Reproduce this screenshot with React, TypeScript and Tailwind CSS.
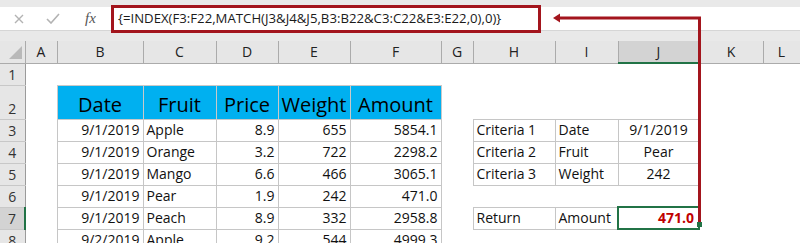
import React from 'react';

type Cell = { t?: string; a?: 'l' | 'r' | 'c'; k?: 'blue' | 'box' | 'ret' };

const colWidths = [25, 32, 86, 73, 62, 72, 91, 32, 82, 63, 81, 64, 37];
const letters = ['A', 'B', 'C', 'D', 'E', 'F', 'G', 'H', 'I', 'J', 'K', 'L'];

const fruitRows = [
  ['9/1/2019', 'Apple', '8.9', '655', '5854.1'],
  ['9/1/2019', 'Orange', '3.2', '722', '2298.2'],
  ['9/1/2019', 'Mango', '6.6', '466', '3065.1'],
  ['9/1/2019', 'Pear', '1.9', '242', '471.0'],
  ['9/1/2019', 'Peach', '8.9', '332', '2958.8'],
  ['9/2/2019', 'Apple', '9.2', '544', '4999.3'],
];

const criteria: Record<number, [string, string, string]> = {
  0: ['Criteria 1', 'Date', '9/1/2019'],
  1: ['Criteria 2', 'Fruit', 'Pear'],
  2: ['Criteria 3', 'Weight', '242'],
};

function buildRows(): Cell[][] {
  const rows: Cell[][] = [];
  // row 1
  rows.push(Array.from({ length: 12 }, () => ({})));
  // row 2 - blue header
  const head = ['Date', 'Fruit', 'Price', 'Weight', 'Amount'];
  rows.push([{}, ...head.map((t) => ({ t, a: 'c' as const, k: 'blue' as const })), {}, {}, {}, {}, {}, {}]);
  fruitRows.forEach((r, i) => {
    const row: Cell[] = [
      {},
      { t: r[0], a: 'r', k: 'box' },
      { t: r[1], a: 'l', k: 'box' },
      { t: r[2], a: 'r', k: 'box' },
      { t: r[3], a: 'r', k: 'box' },
      { t: r[4], a: 'r', k: 'box' },
      {},
    ];
    const c = criteria[i];
    if (c) {
      row.push({ t: c[0], a: 'l', k: 'box' }, { t: c[1], a: 'l', k: 'box' }, { t: c[2], a: 'c', k: 'box' });
    } else if (i === 4) {
      row.push({ t: 'Return', a: 'l', k: 'box' }, { t: 'Amount', a: 'l', k: 'box' }, { t: '471.0', a: 'r', k: 'ret' });
    } else {
      row.push({}, {}, {});
    }
    row.push({}, {});
    rows.push(row);
  });
  return rows;
}

function cellClass(c: Cell) {
  const align = c.a === 'r' ? 'text-right' : c.a === 'c' ? 'text-center' : 'text-left';
  if (c.k === 'blue') return `${align} bg-[#00b0f0] border border-[#c9c9c9] text-[20px] text-black align-bottom pb-[4px]`;
  if (c.k === 'ret') return `${align} border-2 border-[#217346] font-bold text-[#c00000] pr-[4px]`;
  if (c.k === 'box') return `${align} border border-[#c6c6c6] px-[3px]`;
  return '';
}

export default function App() {
  const rows = buildRows();
  return (
    <div className="relative w-[800px] h-[243px] overflow-hidden bg-white text-[#111]" style={{ fontFamily: '"Open Sans", "Noto Sans", sans-serif' }}>
      {/* formula bar */}
      <div className="h-[41px] bg-[#e9e9e9] pt-[7px]">
        <div className="h-[24px] bg-white flex items-center border-b border-[#d6d6d6]">
          <div className="w-[111px] h-full flex items-center">
            <svg width="10" height="10" viewBox="0 0 10 10" className="ml-[14px]">
              <path d="M1 1 L9 9 M9 1 L1 9" stroke="#b3b3b3" strokeWidth="1.4" />
            </svg>
            <svg width="14" height="11" viewBox="0 0 14 11" className="ml-[22px]">
              <path d="M1 6 L5 10 L13 1" stroke="#b3b3b3" strokeWidth="1.6" fill="none" />
            </svg>
            <span className="ml-[25px] text-[15px] italic text-[#555]" style={{ fontFamily: '"Liberation Serif", serif' }}>
              fx
            </span>
          </div>
          <div className="w-[430px] h-[28px] shrink-0 border-[3px] border-[#a3151d] flex items-center pl-[4px] text-[13.2px] text-[#1a1a1a] whitespace-nowrap">
            {'{=INDEX(F3:F22,MATCH(J3&J4&J5,B3:B22&C3:C22&E3:E22,0),0)}'}
          </div>
        </div>
      </div>

      {/* sheet */}
      <table className="table-fixed border-collapse w-[800px] text-[14px]">
        <colgroup>
          {colWidths.map((w, i) => (
            <col key={i} style={{ width: w }} />
          ))}
        </colgroup>
        <thead>
          <tr className="h-[20px]">
            <th className="bg-[#e6e6e6] border-r border-b border-[#ababab] p-0 relative">
              <svg width="13" height="13" viewBox="0 0 13 13" className="absolute right-[3px] bottom-[4px]">
                <path d="M13 0 L13 13 L0 13 Z" fill="#b9b9b9" />
              </svg>
            </th>
            {letters.map((l) => (
              <th
                key={l}
                className={
                  l === 'J'
                    ? 'bg-[#d3d3d3] border-r border-[#ababab] border-b-2 border-b-[#217346] font-normal text-[14px] text-[#222] p-0'
                    : 'bg-[#e6e6e6] border-r border-b border-[#ababab] font-normal text-[14px] text-[#222] p-0'
                }
              >
                {l}
              </th>
            ))}
          </tr>
        </thead>
        <tbody>
          {rows.map((row, ri) => (
            <tr key={ri} className={ri === 0 ? 'h-[20px]' : ri === 1 ? 'h-[34px]' : 'h-[22px]'}>
              <td
                className={
                  ri === 6
                    ? 'bg-[#d3d3d3] border-b border-b-[#c8c8c8] border-r-2 border-r-[#217346] text-center text-[#333] p-0 align-bottom'
                    : 'bg-[#e6e6e6] border-b border-b-[#c8c8c8] border-r border-r-[#9b9b9b] text-center text-[#333] p-0 align-bottom'
                }
              >
                {ri + 1}
              </td>
              {row.map((c, ci) => (
                <td key={ci} className={`p-0 leading-[20px] whitespace-nowrap overflow-hidden ${cellClass(c)}`}>
                  {c.t}
                </td>
              ))}
            </tr>
          ))}
        </tbody>
      </table>

      {/* arrow annotation */}
      <svg className="absolute inset-0 pointer-events-none" width="800" height="243">
        <polyline points="699.5,223 699.5,18 558,18" fill="none" stroke="#a3151d" strokeWidth="3" />
        <polygon points="553,18 560,13.5 560,22.5" fill="#a3151d" />
        <rect x="697" y="222" width="5" height="5" fill="#217346" />
      </svg>
    </div>
  );
}
